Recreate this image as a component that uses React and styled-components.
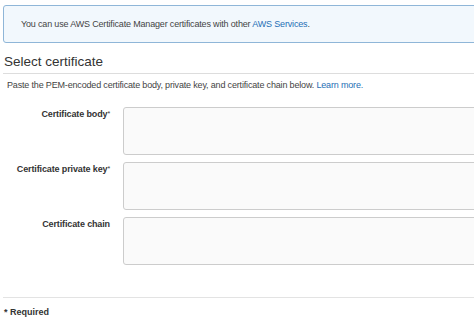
import React from 'react'
import styled, { createGlobalStyle } from 'styled-components'

const GlobalStyle = createGlobalStyle`
    body {
        margin : 0;
        background : #ffffff;
        font-family : "Liberation Sans", Arial, sans-serif;
        color : #333333;
        overflow : hidden;
    }
`

const App = () => {
    return (
        <>
            <GlobalStyle />
            <Wrapper>
                <InfoBox>
                    You can use AWS Certificate Manager certificates with other <Link href="#">AWS Services</Link>.
                </InfoBox>
                <Heading>Select certificate</Heading>
                <Desc>
                    Paste the PEM-encoded certificate body, private key, and certificate chain below. <Link href="#">Learn more.</Link>
                </Desc>
                <Form>
                    <Row>
                        <Label>Certificate body<Star>*</Star></Label>
                        <TextBox />
                    </Row>
                    <Row>
                        <Label>Certificate private key<Star>*</Star></Label>
                        <TextBox />
                    </Row>
                    <Row>
                        <Label>Certificate chain</Label>
                        <TextBox />
                    </Row>
                </Form>
                <Footer>
                    <Required>* Required</Required>
                </Footer>
            </Wrapper>
        </>
    )
}

const Wrapper = styled.div`
    width : 520px;
    padding : 5px 0 0 3px;
`

const InfoBox = styled.div`
    height : 38px;
    box-sizing : border-box;
    padding-left : 17px;
    background : #f2f8fd;
    border : 1px solid #8fb6d8;
    border-radius : 3px;
    font-size : 9px;
    line-height : 36px;
    letter-spacing : -0.17px;
    color : #444444;
`

const Link = styled.a`
    color : #1f6fb5;
    text-decoration : none;
`

const Heading = styled.div`
    margin-top : 10px;
    padding : 0 0 2px 1px;
    font-size : 13.5px;
    line-height : 18px;
    color : #333333;
    border-bottom : 1px solid #dddddd;
`

const Desc = styled.div`
    margin-top : 4px;
    padding-left : 4px;
    font-size : 9px;
    line-height : 14px;
    letter-spacing : -0.17px;
    color : #444444;
`

const Form = styled.div`
    margin-top : 15px;
    display : flex;
    flex-direction : column;
    gap : 7px;
`

const Row = styled.div`
    display : grid;
    grid-template-columns : 107px 1fr;
    column-gap : 13px;
`

const Label = styled.div`
    text-align : right;
    padding-top : 1px;
    font-size : 9px;
    line-height : 12px;
    letter-spacing : -0.13px;
    font-weight : bold;
    color : #333333;
`

const Star = styled.span`
    font-size : 7px;
    vertical-align : top;
    font-weight : normal;
`

const TextBox = styled.div`
    height : 48px;
    box-sizing : border-box;
    background : #fafafa;
    border : 1px solid #cccccc;
    border-radius : 3px;
`

const Footer = styled.div`
    margin-top : 32px;
    border-top : 1px solid #e3e3e3;
    padding-top : 9px;
`

const Required = styled.div`
    font-size : 9px;
    font-weight : bold;
    color : #333333;
    padding-left : 1px;
`

export default App
